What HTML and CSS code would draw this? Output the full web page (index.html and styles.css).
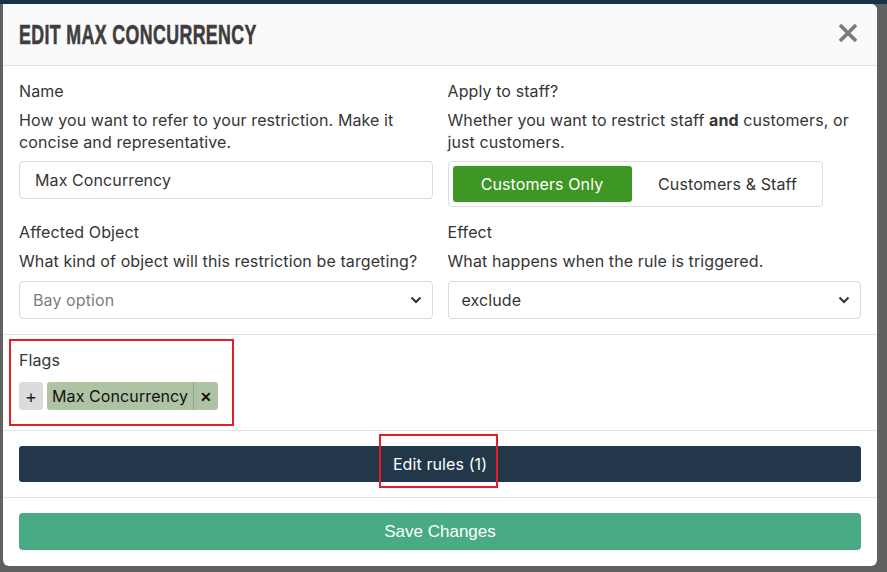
FILE: index.html
```html
<!DOCTYPE html>
<html>
<head>
<meta charset="utf-8">
<link rel="stylesheet" href="styles.css">
</head>
<body>
<div class="topbar"></div>
<div class="backdrop">
  <div class="modal">
    <div class="modal-header">
      <h1 class="title"><span>EDIT MAX CONCURRENCY</span></h1>
      <svg class="close" width="22" height="22" viewBox="0 0 22 22"><path d="M3 3 L19 19 M19 3 L3 19" stroke="#7a7a7a" stroke-width="3.6" stroke-linecap="butt"/></svg>
    </div>
    <div class="section fields">
      <div class="field">
        <div class="label">Name</div>
        <div class="desc">How you want to refer to your restriction. Make it concise and representative.</div>
        <div class="input">Max Concurrency</div>
      </div>
      <div class="field">
        <div class="label">Apply to staff?</div>
        <div class="desc">Whether you want to restrict staff <b>and</b> customers, or just customers.</div>
        <div class="btn-group">
          <div class="seg active">Customers Only</div>
          <div class="seg">Customers &amp; Staff</div>
        </div>
      </div>
      <div class="field">
        <div class="label">Affected Object</div>
        <div class="desc">What kind of object will this restriction be targeting?</div>
        <div class="input select muted">Bay option<svg class="chev" width="12" height="8" viewBox="0 0 12 8"><path d="M1.5 1.5 L6 6 L10.5 1.5" fill="none" stroke="#333" stroke-width="2"/></svg></div>
      </div>
      <div class="field">
        <div class="label">Effect</div>
        <div class="desc">What happens when the rule is triggered.</div>
        <div class="input select">exclude<svg class="chev" width="12" height="8" viewBox="0 0 12 8"><path d="M1.5 1.5 L6 6 L10.5 1.5" fill="none" stroke="#333" stroke-width="2"/></svg></div>
      </div>
    </div>
    <div class="section flags">
      <div class="label">Flags</div>
      <div class="tags">
        <div class="add">+</div>
        <div class="tag"><span class="tag-text">Max Concurrency</span><span class="tag-x">✕</span></div>
      </div>
      <div class="highlight hl-flags"></div>
    </div>
    <div class="section rules">
      <div class="rules-btn">Edit rules (1)</div>
      <div class="highlight hl-rules"></div>
    </div>
    <div class="section footer">
      <div class="save-btn"><span>Save Changes</span></div>
    </div>
  </div>
</div>
</body>
</html>
```

FILE: styles.css
```css
* { box-sizing: border-box; }
html, body { margin: 0; padding: 0; }
body {
  width: 887px;
  height: 572px;
  overflow: hidden;
  background: #606060;
  font-family: Inter, "Liberation Sans", sans-serif;
  color: #353535;
  font-size: 16px;
  letter-spacing: 0.1px;
}
.topbar {
  height: 4px;
  background: #173246;
}
.backdrop {
  padding: 0 10px 0 3px;
}
.modal {
  width: 874px;
  background: #fff;
  border-radius: 0 6px 6px 6px;
  height: 562px;
  display: flex;
  flex-direction: column;
  overflow: hidden;
}
.modal-header {
  height: 62px;
  flex: 0 0 62px;
  background: #fafafa;
  border-bottom: 1px solid #e0e0e0;
  display: flex;
  align-items: center;
  justify-content: space-between;
  padding: 0 18px 0 16px;
}
.title {
  margin: 0;
  font-family: "Liberation Sans Narrow", "Liberation Sans", sans-serif;
  font-weight: bold;
  font-size: 28px;
  color: #3e3e3e;
  line-height: 1;
  padding-top: 1px;
  letter-spacing: 0;
}
.title span {
  display: inline-block;
  transform: scaleX(0.635);
  transform-origin: left center;
  letter-spacing: 0.6px;
  -webkit-text-stroke: 0.6px #3e3e3e;
}
.close { display: block; margin-top: -3px; }

.section {
  border-bottom: 1px solid #e3e3e3;
  padding: 0 16px;
  position: relative;
}
.fields {
  display: grid;
  grid-template-columns: 1fr 1fr;
  column-gap: 15px;
  row-gap: 14px;
  padding-top: 14px;
  padding-bottom: 15px;
}
.label {
  line-height: 22px;
  margin-bottom: 7px;
}
.desc {
  line-height: 22px;
  margin-bottom: 8px;
  min-height: 44px;
}
.fields .field:nth-child(3) .desc,
.fields .field:nth-child(4) .desc { min-height: 22px; margin-bottom: 9px; }
.input {
  height: 38px;
  border: 1px solid #dadada;
  border-radius: 4px;
  padding: 0 15px;
  display: flex;
  align-items: center;
  justify-content: space-between;
  line-height: 1;
  color: #353535;
}
.select { padding-left: 13px; padding-right: 10px; }
.muted { color: #7d7d7d; }
.chev { display: block; }
.btn-group {
  width: 375px;
  height: 46px;
  border: 1px solid #dedede;
  border-radius: 4px;
  padding: 4px;
  display: flex;
}
.seg {
  flex: 1;
  display: flex;
  align-items: center;
  justify-content: center;
  border-radius: 3px;
  color: #333;
  padding-left: 6px;
}
.seg.active {
  flex: 0 0 179px;
  background: #3e9624;
  color: #fff;
  padding-left: 0;
}
.flags {
  padding-top: 14px;
  padding-bottom: 20px;
}
.flags .label { margin-bottom: 11px; }
.tags {
  display: flex;
  gap: 4px;
}
.add {
  width: 24px;
  height: 28px;
  background: #dcdcdc;
  border-radius: 3px;
  display: flex;
  align-items: center;
  justify-content: center;
  font-size: 18px;
  color: #222;
}
.tag {
  height: 28px;
  background: #adc3a4;
  border-radius: 3px;
  display: flex;
  align-items: center;
  color: #111;
}
.tag-text {
  padding: 0 5px 0 5px;
  font-size: 16px;
}
.tag-x {
  height: 100%;
  border-left: 1px solid #93aa8a;
  width: 25px;
  display: flex;
  align-items: center;
  justify-content: center;
  font-size: 14px;
  font-weight: bold;
}
.rules {
  padding-top: 15px;
  padding-bottom: 15px;
}
.rules-btn {
  height: 36px;
  background: #22384a;
  color: #fff;
  border-radius: 3px;
  display: flex;
  align-items: center;
  justify-content: center;
}
.footer {
  border-bottom: none;
  padding-top: 15px;
}
.save-btn {
  height: 37px;
  background: #49ab84;
  border-radius: 4px;
  display: flex;
  align-items: center;
  justify-content: center;
  color: #fff;
  font-family: "Liberation Sans Narrow", "Liberation Sans", sans-serif;
  font-size: 17px;
  letter-spacing: 0;
}
.highlight {
  position: absolute;
  border: 2px solid #e01f26;
  pointer-events: none;
}
.hl-flags {
  left: 6px;
  top: 4px;
  width: 225px;
  height: 87px;
}
.hl-rules {
  left: 376px;
  top: 3px;
  width: 119px;
  height: 54px;
}
```
